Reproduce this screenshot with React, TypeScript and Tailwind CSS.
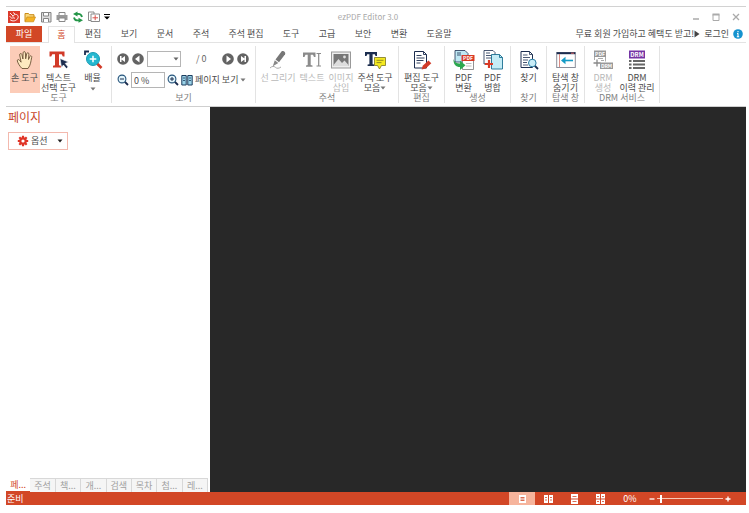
import { type ReactNode } from "react";
import { clsx } from "clsx";

const HandIcon = () => (
  <svg viewBox="0 0 20 20" className="size-5">
    <path
      d="M7 18.500C4.800 16.200 3 13.500 2.300 11c-.4-1.500 1.400-2 2.200-.8l1.600 2L4.700 5c-.3-1.700 1.800-2 2.200-.5l1 4.500.2-6.200c.1-1.600 2.200-1.600 2.300 0l.3 6 1-5.100c.4-1.500 2.400-1.100 2.200.4l-.4 5.400 1.300-3c.7-1.300 2.300-.6 1.900.8-1 4.500-.9 7.500-3.700 11.200z"
      fill="#fde9c0"
      stroke="#6b5135"
      strokeWidth=".9"
      strokeLinejoin="round"
    />
  </svg>
);

const TextSelectIcon = () => (
  <svg viewBox="0 0 20 20" className="size-5">
    <path d="M.5 1.500h15v5h-1.700L12.700 4.200H10v11l2 .6v1.700H4v-1.700l2-.6v-11H3.300L2.200 6.500H.5z" fill="#d13a28" />
    <path d="M11 8.500l8.500 3.500-3.300 1.400 3 3.600-1.900 1.600-2.900-3.600-1.900 2.500z" fill="#1c2d4f" stroke="#fff" strokeWidth=".6" />
  </svg>
);

const ScaleIcon = () => (
  <svg viewBox="0 0 20 20" className="size-5">
    <path d="M2 5V1.500h4" fill="none" stroke="#1c2d4f" strokeWidth="1.800" />
    <path d="M14 13.500l4.500 4.500" stroke="#d13a28" strokeWidth="2.600" />
    <circle cx="10" cy="9" r="6.500" fill="#25b8d0" stroke="#1a9cb5" />
    <path d="M10 5.700v6.600M6.700 9h6.600" stroke="#fff" strokeWidth="1.500" />
  </svg>
);

const PenIcon = () => (
  <svg viewBox="0 0 20 20" className="size-5">
    <path d="M13.500 1.500c1.500-1.300 4.500.9 3.600 2.800L11 12.200 7.500 9.600z" fill="#777" />
    <path d="M6.800 10.300l3.500 2.600-5.500 3.300z" fill="#888" />
    <path d="M2 18c2-2 4-2 5.500-.6s3.500 1 5.500-.4" fill="none" stroke="#aaa" strokeWidth="1" />
  </svg>
);

const TextIcon = () => (
  <svg viewBox="0 0 20 20" className="size-5">
    <path d="M1 2.500h12.500v4.500h-1.500L11 4.800H8.700V15l1.800.4v1.300H4V15.400l1.700-.4V4.800H3.500L2.500 7H1z" fill="#8b8b8b" />
    <path d="M14.500 3.500h4.500M14.500 16h4.500M16.700 3.500V16" stroke="#8b8b8b" strokeWidth="1.200" fill="none" />
  </svg>
);

const ImageIcon = () => (
  <svg viewBox="0 0 20 20" className="size-5">
    <rect x=".5" y="2" width="19" height="16" fill="#eee" stroke="#999" />
    <rect x="2.500" y="4" width="15" height="12" fill="#777" />
    <path d="M2.500 15l5-6 3.500 4 2.500-2.500 4 4.500v1h-15z" fill="#ddd" />
    <circle cx="13.500" cy="7" r="1.400" fill="#ddd" />
  </svg>
);

const NoteToolsIcon = () => (
  <svg viewBox="0 0 22 20" className="h-5 w-[22px]">
    <path d="M1 2h12v4h-1.500L10.800 4.200H8.600v10l1.800.4V16H3.600v-1.400l1.800-.4v-10H3.200L2.500 6H1z" fill="#1c2d4f" />
    <path d="M10.500 7.500h11v8H17.500l-2 3.500-2-3.500h-3z" fill="#f4e920" stroke="#7b7520" strokeWidth=".8" />
    <path d="M12.500 10.300h7M12.500 12.600h5" stroke="#7b7520" strokeWidth=".8" />
  </svg>
);

const EditToolsIcon = () => (
  <svg viewBox="0 0 20 20" className="size-5">
    <path d="M2.500 1.500h9l3 3V18h-12z" fill="#fff" stroke="#1c2d4f" />
    <path d="M11.500 1.500v3h3M4.500 5.500h5M4.500 8h8M4.500 10.500h7M4.500 13h4" fill="none" stroke="#1c2d4f" strokeWidth=".9" />
    <path d="M16.500 10.500l2.800 2.700-5.600 5.300-4 1 1-3.800z" fill="#d13a28" />
  </svg>
);

const PdfConvertIcon = () => (
  <svg viewBox="0 0 22 22" className="size-[22px]">
    <path d="M2 1.500h10l3 3V13H2z" fill="#bfe8f3" stroke="#1c2d4f" strokeWidth=".8" />
    <path d="M4 4h4M4 6h4" stroke="#1c2d4f" strokeWidth=".8" />
    <path d="M9.500 6.500h11v14h-11z" fill="#fff" stroke="#777" strokeWidth=".8" />
    <path d="M8.500 6h13v6h-13z" fill="#d93a26" />
    <text x="15" y="10.800" textAnchor="middle" fontSize="5" fontWeight="700" fill="#fff">PDF</text>
    <path d="M13 14.500h5.500M13 17h5.500" stroke="#aaa" strokeWidth=".8" />
    <path d="M.5 10c.8 3.200 3 4.500 6.500 4.500v-2.700l5.500 4.500L7 21v-3C3 18 .2 15.500.5 10z" fill="#2ca84f" />
  </svg>
);

const PdfMergeIcon = () => (
  <svg viewBox="0 0 22 22" className="size-[22px]">
    <path d="M2 1.500h9l2 2V15H2z" fill="#fff" stroke="#1c2d4f" strokeWidth=".8" />
    <path d="M4 4h4M4 6.500h7M4 9h7" stroke="#1c2d4f" strokeWidth=".8" />
    <path d="M9.500 5.500h8l3 3V20h-11z" fill="#c5ecf6" stroke="#1c6f91" strokeWidth=".9" />
    <path d="M17.500 5.500v3h3" fill="none" stroke="#1c6f91" strokeWidth=".9" />
    <path d="M7 11v8M3 15h8" stroke="#d93a26" strokeWidth="2.200" />
  </svg>
);

const FindIcon = () => (
  <svg viewBox="0 0 20 20" className="size-5">
    <path d="M2 1.500h8.500l3 3V17.500H2z" fill="#fff" stroke="#1c2d4f" />
    <path d="M10.500 1.500v3h3M4 5h4.500M4 7.500h7M4 10h5M4 12.500h4M4 15h5" fill="none" stroke="#1c2d4f" strokeWidth=".8" />
    <path d="M15.500 15.500l3.500 3.500" stroke="#1c2d4f" strokeWidth="1.800" />
    <circle cx="13.300" cy="13" r="3.800" fill="#c9edf8" stroke="#2a7ca3" />
  </svg>
);

const HidePaneIcon = () => (
  <svg viewBox="0 0 20 20" className="size-5">
    <rect x=".7" y="2.500" width="18.600" height="15" fill="#fff" stroke="#8b8f9b" />
    <path d="M.7 3.200h18.600" stroke="#1c2d4f" strokeWidth="2" />
    <path d="M15 3.200h3" stroke="#d66" strokeWidth="1" />
    <path d="M3.500 4v13" stroke="#d98b84" strokeWidth="1" />
    <path d="M17 10.500H8" stroke="#149bc6" strokeWidth="1.600" />
    <path d="M5 10.500L9.500 6.700v7.600z" fill="#149bc6" />
  </svg>
);

const DrmCreateIcon = () => (
  <svg viewBox="0 0 20 20" className="size-5">
    <path d="M1 .5h12v6.500H1z" fill="#999" />
    <text x="7" y="5.600" textAnchor="middle" fontSize="5" fontWeight="700" fill="#fff">PDF</text>
    <path d="M1.500 7v3M12.500 7v4.500M5 8.500h5M8 10.500h3" fill="none" stroke="#aaa" />
    <path d="M4 9.500v7M.5 13h7" stroke="#888" strokeWidth="1.300" />
    <path d="M7 12.500h13v6.500H7z" fill="#999" />
    <text x="13.500" y="17.600" textAnchor="middle" fontSize="5" fontWeight="700" fill="#fff">DRM</text>
  </svg>
);

const DrmHistoryIcon = () => (
  <svg viewBox="0 0 20 20" className="size-5">
    <path d="M2 .5h16v8H2z" fill="#7434a4" />
    <text x="10" y="6.700" textAnchor="middle" fontSize="6" fontWeight="700" fill="#fff">DRM</text>
    <path d="M2 11h2.500M2 14.500h2.500M2 18h2.500M6 11h12M6 14.500h12M6 18h12" stroke="#666" strokeWidth="1.800" />
  </svg>
);

const Magnifier = ({ plus }: { plus?: boolean }) => (
  <svg viewBox="0 0 12 12" className="size-3">
    <path d="M7.500 7.500l3.500 3.500" stroke="#1c2d4f" strokeWidth="1.800" />
    <circle cx="5" cy="5" r="3.900" fill="#e3f5fb" stroke="#24527a" strokeWidth="1.100" />
    <path d={plus ? "M3 5h4M5 3v4" : "M3 5h4"} stroke="#1c2d4f" />
  </svg>
);

const NavIcon = ({ d }: { d: string }) => (
  <svg viewBox="0 0 12 12" className="size-3">
    <circle cx="6" cy="6" r="5.800" fill="#636363" />
    <path d={d} fill="#fff" />
  </svg>
);

const Caret = ({ className }: { className?: string }) => (
  <svg viewBox="0 0 6 4" className={clsx("h-1 w-1.5 shrink-0", className)}>
    <path d="M.5.500h5L3 3.500z" fill="currentColor" />
  </svg>
);

const quickAccess = [
  {
    name: "ezPDF",
    icon: (
      <svg viewBox="0 0 12 12" className="size-3">
        <path d="M0 0h12v12H0z" fill="#dc3b2c" />
        <path d="M2 8.500c2 2.500 7 1.500 8-1.500s-2-4.500-4-3-1 4 1 3M2 2l3 3M1.500 5l3 3M5 1.500l2 1.500" fill="none" stroke="#fff" strokeWidth=".9" />
      </svg>
    ),
  },
  {
    name: "열기",
    icon: (
      <svg viewBox="0 0 12 12" className="size-3">
        <path d="M1 10.500v-8h3.500l1 1.200H10V6" fill="#f8d77c" stroke="#c98b17" />
        <path d="M1 10.800L3 6h8.500l-2 4.800z" fill="#f5b324" stroke="#c98b17" strokeWidth=".7" />
      </svg>
    ),
  },
  {
    name: "저장",
    icon: (
      <svg viewBox="0 0 12 12" className="size-3">
        <path d="M1.500 1.500h9.500v9.500H1.500z" fill="#ddd" stroke="#858585" />
        <path d="M3.500 1.500h5v3.500h-5zM3.500 11v-3.500h5v3.500" fill="#fff" stroke="#858585" />
      </svg>
    ),
  },
  {
    name: "인쇄",
    icon: (
      <svg viewBox="0 0 12 12" className="size-3">
        <path d="M3 4V1.500h6V4" fill="#fff" stroke="#888" />
        <path d="M.5 4h11v5H.5z" fill="#999" />
        <path d="M3 7h6v3.500H3z" fill="#fff" stroke="#888" />
      </svg>
    ),
  },
  {
    name: "새로 고침",
    icon: (
      <svg viewBox="0 0 12 12" className="size-3">
        <path d="M10 6c-.5-2.500-2.500-3.500-5.500-3" fill="none" stroke="#239547" strokeWidth="1.800" />
        <path d="M5.500.500v5L1 3z" fill="#239547" />
        <path d="M2 6.500c.5 2.500 2.500 3.300 5 2.800" fill="none" stroke="#239547" strokeWidth="1.800" />
        <path d="M6.500 6.700v5L11 9.200z" fill="#239547" />
      </svg>
    ),
  },
  {
    name: "창 맞춤",
    icon: (
      <svg viewBox="0 0 12 12" className="size-3">
        <path d="M.5 1h5.500v2M.5 1v8.500H3M3 3h8.500v7.500H3z" fill="none" stroke="#8a8a8a" />
        <path d="M4.500 6.800h5.500M7.200 4.200v5" stroke="#d9534a" />
      </svg>
    ),
  },
];

const tabs = ["홈", "편집", "보기", "문서", "주석", "주석 편집", "도구", "고급", "보안", "변환", "도움말"];

const sideTabs = ["페이지", "주석", "책갈피", "개체 목록", "검색", "목차", "첨부 파일", "레이어"];
const sideTabLabels = ["페...", "주석", "책...", "개...", "검색", "목차", "첨...", "레..."];

const pageModes = [
  { name: "한 페이지", d: "M1 1h7v8H1z", lines: "M2.500 3.500h4M2.500 5h4M2.500 6.500h4" },
  { name: "두 페이지", d: "M0 1h4v8H0zM5 1h4v8H5z", lines: "M1 3.500h2M1 6h2M6 3.500h2M6 6h2" },
  { name: "연속 페이지", d: "M1 0h7v4.500H1zM1 5.500h7V10H1z", lines: "M2.500 2.500h4M2.500 7.500h4" },
  { name: "연속 두 페이지", d: "M0 0h4v4.500H0zM5 0h4v4.500H5zM0 5.500h4V10H0zM5 5.500h4V10H5z", lines: "M1 2.500h2M6 2.500h2M1 7.500h2M6 7.500h2" },
];

const Group = ({
  title,
  className,
  children,
}: {
  title: string;
  className: string;
  children: ReactNode;
}) => (
  <section className={clsx("flex shrink-0 flex-col border-r border-[#e3e3e3]", className)}>
    <div className="flex h-[47px] shrink-0 justify-center">{children}</div>
    <h2 className="text-center text-[9px] leading-[10px] text-[#808080]">{title}</h2>
  </section>
);

const Tool = ({
  icon,
  lines,
  className,
  active,
  disabled,
  caret,
}: {
  icon: ReactNode;
  lines: string[];
  className: string;
  active?: boolean;
  disabled?: boolean;
  caret?: boolean;
}) => (
  <button
    type="button"
    disabled={disabled}
    className={clsx(
      "flex h-[47px] shrink-0 flex-col items-center text-[9px] leading-[10px] whitespace-nowrap",
      active && "bg-[#fcccb8]",
      disabled ? "text-[#b8b8b8]" : "text-[#4c4c4c]",
      className,
    )}
  >
    <span className="flex h-[27px] items-center justify-center">{icon}</span>
    {lines.map((line, i) => (
      <span key={line} className="flex items-center">
        {line}
        {caret && i > 0 && <Caret className="text-[#777]" />}
      </span>
    ))}
    {caret && lines.length === 1 && <Caret className="mt-1 text-[#777]" />}
  </button>
);

export default function App() {
  return (
    <div className="flex h-screen min-h-96 flex-col bg-white pt-1.5 pr-[3px] pb-2 pl-1.5 font-['Noto_Sans_CJK_KR',sans-serif] text-[9px] leading-3 text-[#4c4c4c]">
      <header className="flex h-5 shrink-0 items-center border-t border-[#d2d2d2]">
        <div className="flex flex-1 items-center gap-1 pl-0.5">
          {quickAccess.map((item) => (
            <button key={item.name} type="button" aria-label={item.name}>
              {item.icon}
            </button>
          ))}
          <button type="button" aria-label="빠른 실행 설정" className="text-black">
            <svg viewBox="0 0 6 6" className="size-1.5">
              <path d="M0 0h6v1H0zM0 2.500h6L3 5.500z" fill="currentColor" />
            </svg>
          </button>
        </div>
        <h1 className="mr-3 text-[8px] text-[#a8a8a8]">ezPDF Editor 3.0</h1>
        <div className="flex flex-1 items-center justify-end gap-3 pr-1.5 text-[#aaa]">
          <button type="button" aria-label="최소화">
            <svg viewBox="0 0 8 8" className="size-2">
              <path d="M1 6h6" stroke="currentColor" strokeWidth="1.500" />
            </svg>
          </button>
          <button type="button" aria-label="최대화">
            <svg viewBox="0 0 8 8" className="size-2">
              <path d="M1 1.500h6v6H1z" fill="none" stroke="currentColor" />
              <path d="M.5 1.500h7" stroke="currentColor" strokeWidth="2" />
            </svg>
          </button>
          <button type="button" aria-label="닫기">
            <svg viewBox="0 0 8 8" className="size-2">
              <path d="M1 1l6 6M7 1L1 7" stroke="currentColor" strokeWidth="1.300" />
            </svg>
          </button>
        </div>
      </header>

      <nav className="flex h-[17px] shrink-0 items-stretch border-b border-[#e3e3e3]">
        <button type="button" className="w-9 bg-[#d24726] text-white">
          파일
        </button>
        {tabs.map((tab) => (
          <button
            key={tab}
            type="button"
            className={clsx(
              "whitespace-nowrap",
              tab === "홈" && "-mb-px ml-1.5 w-[27px] border border-b-0 border-[#e3e3e3] bg-white text-[#d24726]",
              tab === "주석 편집" ? "w-[54px]" : tab === "도움말" ? "w-11" : tab !== "홈" && "w-9",
            )}
          >
            {tab}
          </button>
        ))}
        <div className="ml-auto flex items-center pr-[3px] whitespace-nowrap">
          <a href="#join">무료 회원 가입하고 혜택도 받고!</a>
          <svg viewBox="0 0 6 8" className="h-2 w-1.5">
            <path d="M.5.500L5.500 4l-5 3.500z" fill="#444" />
          </svg>
          <a href="#login" className="ml-1">
            로그인
          </a>
          <button type="button" aria-label="정보" className="ml-1">
            <svg viewBox="0 0 10 10" className="size-2.5">
              <circle cx="5" cy="5" r="4.800" fill="#1593cf" />
              <path d="M5 4.300V8M5 2v1.300M4 4.500h1M3.800 7.800h2.400" stroke="#fff" strokeWidth="1.100" />
            </svg>
          </button>
        </div>
      </nav>

      <div className="flex h-16 shrink-0 overflow-hidden border-b border-[#cfcfcf] py-[3px]">
        <Group title="도구" className="w-[106px]">
          <Tool icon={<HandIcon />} lines={["손 도구"]} className="w-[30px]" active />
          <Tool icon={<TextSelectIcon />} lines={["텍스트", "선택 도구"]} className="w-[38px]" />
          <Tool icon={<ScaleIcon />} lines={["배율"]} className="w-[30px]" caret />
        </Group>

        <Group title="보기" className="w-36">
          <div className="flex flex-1 flex-col gap-[5px] pt-[5px] pr-1.5 pl-[5px]">
            <div className="flex h-4 items-center gap-[3px]">
              <button type="button" aria-label="첫 페이지">
                <NavIcon d="M3 3h1.500v2.500L8 3v6L4.500 6.500V9H3z" />
              </button>
              <button type="button" aria-label="이전 페이지">
                <NavIcon d="M3 6l4.500-3.500v7z" />
              </button>
              <div className="relative">
                <select aria-label="페이지 번호" className="block h-4 w-[34px] appearance-none border border-[#b5b5b5] bg-white">
                  <option value="" />
                </select>
                <Caret className="pointer-events-none absolute top-1.5 right-0.5 text-[#666]" />
              </div>
              <span className="ml-3 text-[#666]">/ 0</span>
              <button type="button" aria-label="다음 페이지" className="ml-auto">
                <NavIcon d="M4.500 2.500L9 6 4.500 9.500z" />
              </button>
              <button type="button" aria-label="마지막 페이지">
                <NavIcon d="M9 3H7.500v2.500L4 3v6l3.500-2.500V9H9z" />
              </button>
            </div>
            <div className="flex h-4 items-center gap-0.5 whitespace-nowrap">
              <button type="button" aria-label="축소">
                <Magnifier />
              </button>
              <input aria-label="배율" defaultValue="0 %" className="h-4 w-[34px] border border-[#b5b5b5] px-0.5" />
              <button type="button" aria-label="확대">
                <Magnifier plus />
              </button>
              <button type="button" className="flex items-center gap-0.5">
                <svg viewBox="0 0 12 12" className="size-3">
                  <path d="M.8 1.500h4.400v9.500H.8zM6.800 1.500h4.400v9.500H6.800z" fill="#9bd3e8" stroke="#1c3d5f" />
                  <path d="M2 4h2M2 6.500h2M8 4h2M8 6.500h2" stroke="#1c3d5f" strokeWidth=".8" />
                </svg>
                페이지 보기
                <Caret className="text-[#777]" />
              </button>
            </div>
          </div>
        </Group>

        <Group title="주석" className="w-[143px]">
          <Tool icon={<PenIcon />} lines={["선 그리기"]} className="w-[38px]" disabled />
          <Tool icon={<TextIcon />} lines={["텍스트"]} className="w-[30px]" disabled />
          <Tool icon={<ImageIcon />} lines={["이미지", "삽입"]} className="w-7" disabled />
          <Tool icon={<NoteToolsIcon />} lines={["주석 도구", "모음"]} className="w-10" caret />
        </Group>

        <Group title="편집" className="w-[46px]">
          <Tool icon={<EditToolsIcon />} lines={["편집 도구", "모음"]} className="w-[38px]" caret />
        </Group>

        <Group title="생성" className="w-[66px]">
          <Tool icon={<PdfConvertIcon />} lines={["PDF", "변환"]} className="w-[30px]" />
          <Tool icon={<PdfMergeIcon />} lines={["PDF", "병합"]} className="w-7" />
        </Group>

        <Group title="찾기" className="w-9">
          <Tool icon={<FindIcon />} lines={["찾기"]} className="w-7" />
        </Group>

        <Group title="탐색 창" className="w-[38px]">
          <Tool icon={<HidePaneIcon />} lines={["탐색 창", "숨기기"]} className="w-[30px]" />
        </Group>

        <Group title="DRM 서비스" className="w-[75px]">
          <Tool icon={<DrmCreateIcon />} lines={["DRM", "생성"]} className="w-[30px]" disabled />
          <Tool icon={<DrmHistoryIcon />} lines={["DRM", "이력 관리"]} className="w-[38px]" />
        </Group>
      </div>

      <div className="flex min-h-0 flex-1">
        <aside className="flex w-[204px] shrink-0 flex-col">
          <div className="flex-1 px-0.5 pt-0.5">
            <h2 className="text-xs leading-4 text-[#c8472c]">페이지</h2>
            <button type="button" className="mt-[7px] flex h-[18px] w-[60px] items-center border border-[#f3b9ae] pr-1 pl-2">
              <svg viewBox="0 0 12 12" className="mr-0.5 size-3">
                <path d="M6 .8v10.400M.8 6h10.400M2.300 2.300l7.400 7.400M9.700 2.300L2.300 9.700" stroke="#e03426" strokeWidth="2.200" />
                <circle cx="6" cy="6" r="3.800" fill="#e03426" />
                <circle cx="6" cy="6" r="1.600" fill="#fff" />
              </svg>
              옵션
              <Caret className="ml-auto text-[#222]" />
            </button>
          </div>
          <div className="mr-0.5 flex h-3.5">
            {sideTabLabels.map((label, i) => (
              <button
                key={label}
                type="button"
                title={sideTabs[i]}
                className={clsx(
                  "flex flex-1 items-center justify-center",
                  i === 0
                    ? "border-b border-[#d24726] text-[#d24726]"
                    : "border-t border-r border-[#d8d8d8] bg-[#f5f5f5] text-[#a0a0a0]",
                )}
              >
                {label}
              </button>
            ))}
          </div>
        </aside>
        <main className="flex-1 bg-[#282828]" />
      </div>

      <footer className="flex h-[13px] shrink-0 items-center bg-[#d24726] text-white">
        <span className="mr-auto pl-px">준비</span>
        {pageModes.map((mode, i) => (
          <button
            key={mode.name}
            type="button"
            aria-label={mode.name}
            className={clsx("flex h-full w-[26px] items-center justify-center", i === 0 && "bg-[#f6b49c]")}
          >
            <svg viewBox="0 0 9 10" className="h-2.5 w-[9px]">
              <path d={mode.d} fill="#fff" />
              <path d={mode.lines} stroke="#d24726" strokeWidth=".8" />
            </svg>
          </button>
        ))}
        <span className="w-[34px] text-center">0%</span>
        <button type="button" aria-label="축소" className="flex w-2.5 justify-center">
          <svg viewBox="0 0 6 6" className="size-1.5">
            <path d="M.5 3h5" stroke="#fff" strokeWidth="1.300" />
          </svg>
        </button>
        <input
          type="range"
          aria-label="확대/축소"
          min={0}
          max={100}
          defaultValue={5}
          className="h-2 w-[66px] appearance-none bg-[linear-gradient(#f6c9b8,#f6c9b8)] bg-[length:100%_1px] bg-center bg-no-repeat [&::-webkit-slider-thumb]:h-2 [&::-webkit-slider-thumb]:w-0.5 [&::-webkit-slider-thumb]:appearance-none [&::-webkit-slider-thumb]:bg-white"
        />
        <button type="button" aria-label="확대" className="mr-[15px] ml-0.5">
          <svg viewBox="0 0 6 6" className="size-1.5">
            <path d="M.5 3h5M3 .5v5" stroke="#fff" strokeWidth="1.300" />
          </svg>
        </button>
      </footer>
    </div>
  );
}
